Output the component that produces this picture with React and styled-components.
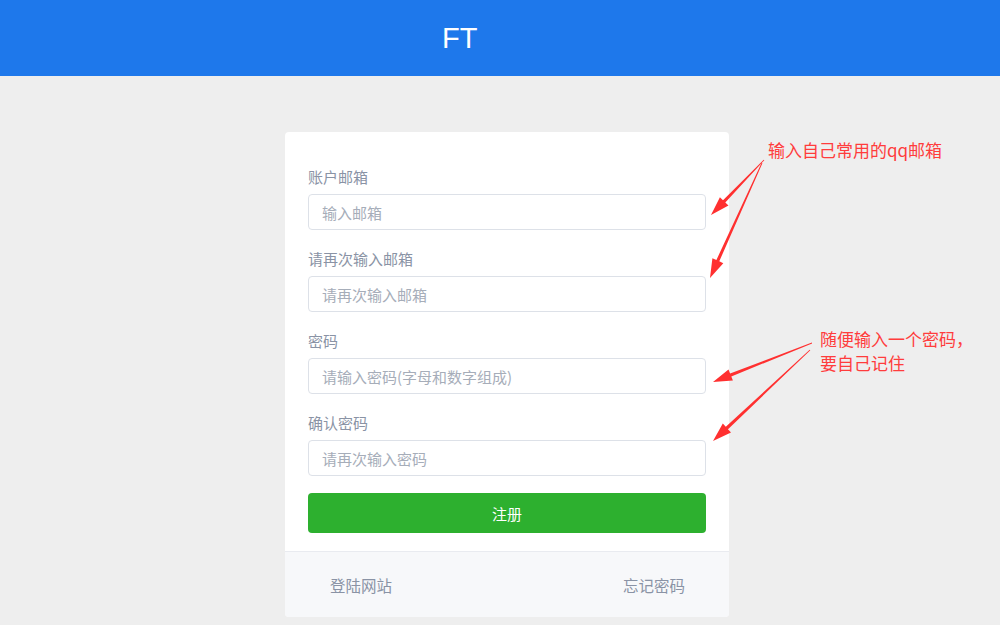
import React from "react";
import styled, { createGlobalStyle } from "styled-components";

const GlobalStyle = createGlobalStyle`
  html, body {
    margin: 0;
    padding: 0;
    background: #eeeeee;
    font-family: "Microsoft YaHei", "Noto Sans CJK SC", "Liberation Sans", sans-serif;
  }
`;

const fields = [
  { label: "账户邮箱", placeholder: "输入邮箱", type: "text" },
  { label: "请再次输入邮箱", placeholder: "请再次输入邮箱", type: "text" },
  { label: "密码", placeholder: "请输入密码(字母和数字组成)", type: "password" },
  { label: "确认密码", placeholder: "请再次输入密码", type: "password" },
];

// tail -> tip, in page coordinates
const arrows = [
  [764, 160, 711, 215],
  [762, 163, 710, 278],
  [812, 343, 713, 382],
  [810, 350, 713, 441],
];

const arrowPoints = ([x1, y1, x2, y2]) => {
  const dx = x2 - x1;
  const dy = y2 - y1;
  const len = Math.hypot(dx, dy);
  const ux = dx / len;
  const uy = dy / len;
  const nx = -uy;
  const ny = ux;
  const headLen = 19;
  const bx = x2 - ux * headLen;
  const by = y2 - uy * headLen;
  const pts = [
    [x1 + nx * 0.4, y1 + ny * 0.4],
    [bx + nx * 1.6, by + ny * 1.6],
    [bx + nx * 6, by + ny * 6],
    [x2, y2],
    [bx - nx * 6, by - ny * 6],
    [bx - nx * 1.6, by - ny * 1.6],
    [x1 - nx * 0.4, y1 - ny * 0.4],
  ];
  return pts.map((p) => p.map((v) => v.toFixed(1)).join(",")).join(" ");
};

const App = () => {
  return (
    <Page>
      <GlobalStyle />
      <Header>
        <Logo>FT</Logo>
      </Header>
      <Main>
        <Card>
          <Form>
            {fields.map((f) => (
              <Field key={f.label}>
                <Label>{f.label}</Label>
                <Input type={f.type} placeholder={f.placeholder} />
              </Field>
            ))}
            <Submit type="button">注册</Submit>
          </Form>
          <CardFooter>
            <FooterLink href="#">登陆网站</FooterLink>
            <FooterLink href="#">忘记密码</FooterLink>
          </CardFooter>
        </Card>
      </Main>

      <Note $top={138} $left={768}>输入自己常用的qq邮箱</Note>
      <Note $top={327} $left={820}>
        <NoteLine>随便输入一个密码，</NoteLine>
        <NoteLine>要自己记住</NoteLine>
      </Note>
      <Arrows width="1000" height="625" viewBox="0 0 1000 625">
        {arrows.map((a, i) => (
          <polygon key={i} points={arrowPoints(a)} fill="#ff3030" />
        ))}
      </Arrows>
    </Page>
  );
};

const Page = styled.div`
  position: relative;
  min-height: 625px;
  overflow: hidden;
`;

const Header = styled.header`
  height: 76px;
  background: #1e78eb;
  display: flex;
  align-items: center;
  padding-left: 442px;
`;

const Logo = styled.h1`
  margin: 0;
  font-family: "Liberation Sans", Arial, sans-serif;
  font-weight: normal;
  font-size: 29px;
  color: #ffffff;
`;

const Main = styled.main`
  padding: 56px 0 0 285px;
`;

const Card = styled.div`
  width: 444px;
  background: #ffffff;
  border-radius: 4px;
  overflow: hidden;
`;

const Form = styled.form`
  display: flex;
  flex-direction: column;
  padding: 35px 23px 18px;
`;

const Field = styled.div`
  display: flex;
  flex-direction: column;
  gap: 7px;
  margin-bottom: 19px;

  &:nth-last-of-type(1) {
    margin-bottom: 17px;
  }
`;

const Label = styled.label`
  font-size: 15px;
  line-height: 20px;
  color: #8a93a5;
`;

const Input = styled.input`
  box-sizing: border-box;
  height: 36px;
  border: 1px solid #dde1e8;
  border-radius: 4px;
  padding: 0 13px;
  font-family: inherit;
  font-size: 15px;
  color: #555;
  outline: none;

  &::placeholder {
    color: #a6adb9;
  }
`;

const Submit = styled.button`
  height: 40px;
  border: none;
  border-radius: 4px;
  background: #2db02f;
  color: #ffffff;
  font-family: inherit;
  font-size: 15px;
  cursor: pointer;
`;

const CardFooter = styled.div`
  height: 65px;
  border-top: 1px solid #e9ebf0;
  background: #f7f8fa;
  display: flex;
  align-items: center;
  justify-content: space-between;
  padding: 0 44px 0 45px;
`;

const FooterLink = styled.a`
  font-size: 15.5px;
  color: #8a93a5;
  text-decoration: none;
`;

const Note = styled.div`
  position: absolute;
  top: ${(p) => p.$top}px;
  left: ${(p) => p.$left}px;
  display: flex;
  flex-direction: column;
  font-size: 17px;
  line-height: 24px;
  color: #ff3c3c;
`;

const NoteLine = styled.span`
  display: block;
`;

const Arrows = styled.svg`
  position: absolute;
  top: 0;
  left: 0;
  pointer-events: none;
`;

export default App;
